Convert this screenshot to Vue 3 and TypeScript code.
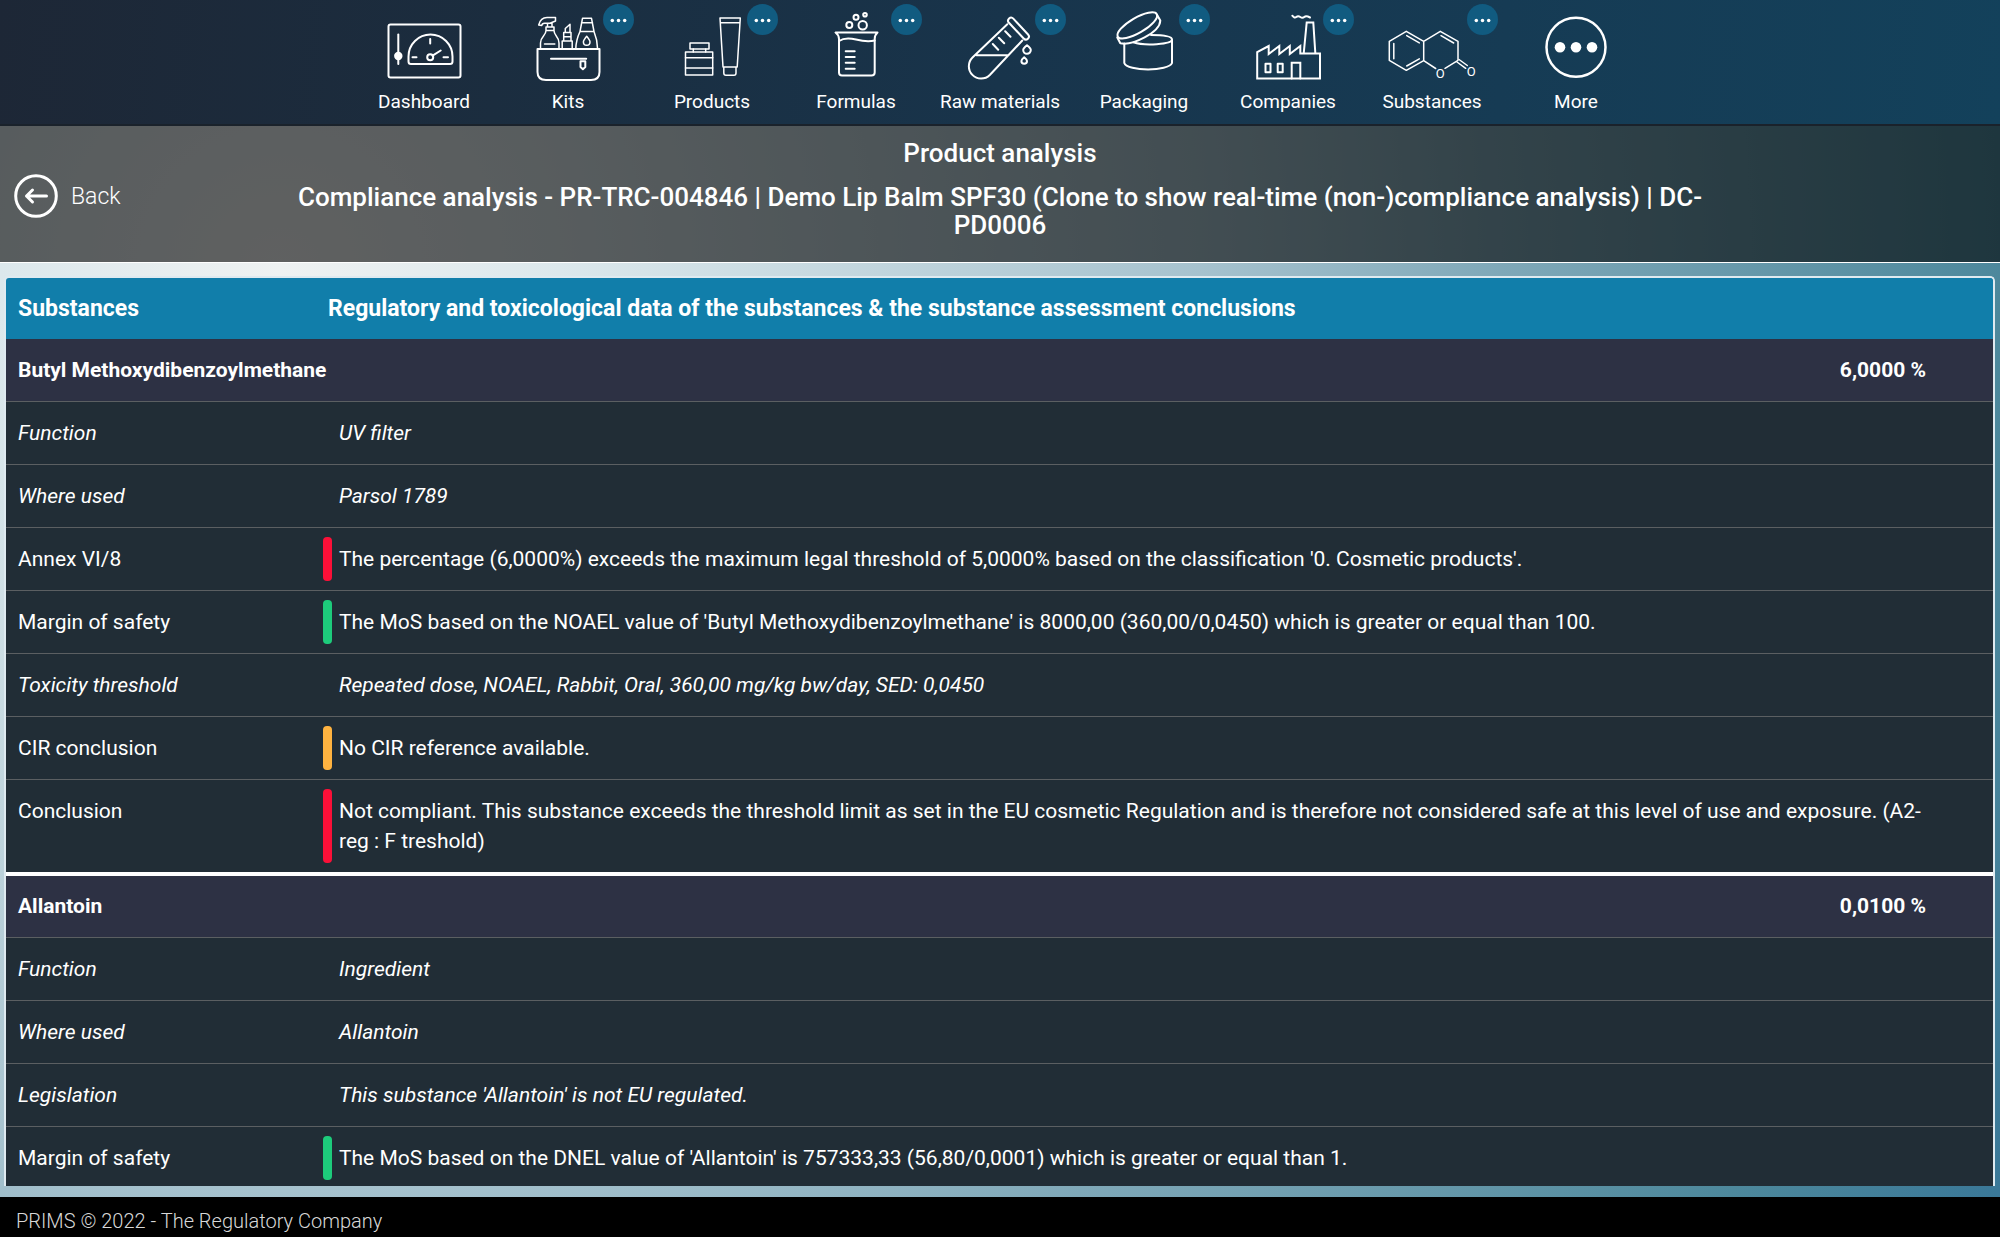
<script setup lang="ts">
type Status = 'fail' | 'pass' | 'warn'

interface NavItem {
  id: string
  label: string
  menu: boolean
}

interface Entry {
  label: string
  text: string
  note?: boolean
  status?: Status
}

interface Substance {
  name: string
  percentage: string
  entries: Entry[]
}

const navItems: NavItem[] = [
  { id: 'dashboard', label: 'Dashboard', menu: false },
  { id: 'kits', label: 'Kits', menu: true },
  { id: 'products', label: 'Products', menu: true },
  { id: 'formulas', label: 'Formulas', menu: true },
  { id: 'raw', label: 'Raw materials', menu: true },
  { id: 'packaging', label: 'Packaging', menu: true },
  { id: 'companies', label: 'Companies', menu: true },
  { id: 'substances', label: 'Substances', menu: true },
  { id: 'more', label: 'More', menu: false },
]

const substances: Substance[] = [
  {
    name: 'Butyl Methoxydibenzoylmethane',
    percentage: '6,0000 %',
    entries: [
      { label: 'Function', text: 'UV filter', note: true },
      { label: 'Where used', text: 'Parsol 1789', note: true },
      {
        label: 'Annex VI/8',
        text: "The percentage (6,0000%) exceeds the maximum legal threshold of 5,0000% based on the classification '0. Cosmetic products'.",
        status: 'fail',
      },
      {
        label: 'Margin of safety',
        text: "The MoS based on the NOAEL value of 'Butyl Methoxydibenzoylmethane' is 8000,00 (360,00/0,0450) which is greater or equal than 100.",
        status: 'pass',
      },
      {
        label: 'Toxicity threshold',
        text: 'Repeated dose, NOAEL, Rabbit, Oral, 360,00 mg/kg bw/day, SED: 0,0450',
        note: true,
      },
      { label: 'CIR conclusion', text: 'No CIR reference available.', status: 'warn' },
      {
        label: 'Conclusion',
        text: 'Not compliant. This substance exceeds the threshold limit as set in the EU cosmetic Regulation and is therefore not considered safe at this level of use and exposure. (A2-reg : F treshold)',
        status: 'fail',
      },
    ],
  },
  {
    name: 'Allantoin',
    percentage: '0,0100 %',
    entries: [
      { label: 'Function', text: 'Ingredient', note: true },
      { label: 'Where used', text: 'Allantoin', note: true },
      { label: 'Legislation', text: "This substance 'Allantoin' is not EU regulated.", note: true },
      {
        label: 'Margin of safety',
        text: "The MoS based on the DNEL value of 'Allantoin' is 757333,33 (56,80/0,0001) which is greater or equal than 1.",
        status: 'pass',
      },
    ],
  },
]
</script>

<template>
  <div class="page">
    <nav class="nav">
      <div v-for="item in navItems" :key="item.id" class="nav-item">
        <a class="nav-link" href="#">
          <svg class="nav-icon" viewBox="0 0 96 72" aria-hidden="true">
            <g v-if="item.id === 'dashboard'">
              <rect x="12.5" y="16.5" width="72" height="53" rx="2" />
              <path d="M22.3 26.5V56" />
              <circle class="solid" cx="22.3" cy="48" r="4.2" />
              <path d="M32.5 48.5A22 22 0 0 1 76.5 48.5V53.5Q76.5 56 74 56H35Q32.5 56 32.5 53.5Z" />
              <path d="M54.2 31V35.5M36.5 49.3H40.5M67.5 49.3H72M56.6 47.6L64.7 42.5" />
              <circle cx="54.2" cy="49.3" r="3" />
            </g>
            <g v-else-if="item.id === 'kits'">
              <path d="M17.5 41H79.5V64Q79.5 72 71 72H26Q17.5 72 17.5 64Z" />
              <path d="M31 50.7H66.2M60.5 53.3H65.3V59L62.9 61.2L60.5 59Z" />
              <g class="fine">
                <path d="M18.7 17C20 12 23 9.6 27 9.6H35.5V13L30 15.2H24.5Q22 15.2 21.8 17.5ZM27.5 15.2V19M32 15V19M26 19H34V22.5H26ZM26 22.5C26 28 20.5 28 20.5 35V41M34 22.5C34 28 39 28 39 35V41M24.5 36H34.8" />
                <path d="M42.2 41V33H52.2V41M43.7 33V24.5H51V33M45.3 24.5V20.5L50 16.2V24.5M43.7 28.7H51" />
                <path d="M62.5 10.3H71.5L74 23.5H60ZM61.5 14.8H72.5M60 23.5Q56 32 55.8 41M74 23.5Q77.5 32 77.6 41" />
                <path d="M66.7 28.3Q70 32.3 70 34A3.3 3.3 0 0 1 63.4 34Q63.4 32.3 66.7 28.3Z" />
              </g>
            </g>
            <g v-else-if="item.id === 'products'" class="fine">
              <rect x="26" y="35" width="19" height="6" />
              <path d="M29.3 41V44M41.7 41V44" />
              <rect x="21.5" y="44" width="27.2" height="23" />
              <path d="M21.5 49.7H48.7M21.5 60H48.7" />
              <path d="M56 10H76.3L73.2 59H59ZM56.3 14.8H76M59.8 59V65Q59.8 67.3 62 67.3H70Q72 67.3 72 65V59" />
            </g>
            <g v-else-if="item.id === 'formulas'">
              <path d="M27.5 24.5H69.5Q66.7 27 66.7 31V64.5Q66.7 67.5 63.5 67.5H34Q31 67.5 31 64.5V31Q31 27 27.5 24.5Z" />
              <path d="M31 33C36 29.5 42 30 48 31.5S60 34 66.7 32.5M37.7 43.3H46.7M37.7 49H46.7M37.7 54.8H46.7M37.7 60.7H46.7" />
              <circle cx="41.3" cy="17" r="3" />
              <circle cx="48" cy="9.3" r="2.5" />
              <circle cx="57" cy="6.7" r="1.8" />
              <circle cx="54.7" cy="17.3" r="4.2" />
            </g>
            <g v-else-if="item.id === 'raw'">
              <rect x="52.7" y="17.6" width="27.6" height="6" rx="3" transform="rotate(47 66.5 20.6)" />
              <path d="M55.3 16.3L20.5 49.5A12.2 12.2 0 0 0 37.8 67L70.3 32.5M24.5 47.2H56.5M53.2 23.3L58.5 28.7M46.8 29.7L52.2 35.3M40.8 36L46.2 41.7" />
              <path d="M75 37.3Q78.8 40.4 78.8 42A3.8 3.8 0 0 1 71.2 42Q71.2 40.4 75 37.3Z" />
              <path d="M72.2 49.3Q75 51.6 75 53A2.8 2.8 0 0 1 69.4 53Q69.4 51.6 72.2 49.3Z" />
            </g>
            <g v-else-if="item.id === 'packaging'">
              <ellipse cx="41.3" cy="17.4" rx="22.5" ry="7.6" transform="rotate(-30 41.3 17.4)" />
              <path d="M21.3 29.5L24.3 35.3C36 38 64 24.5 64.3 12.5L61 6.7" />
              <path d="M37.5 34.2C48 38 76 36.5 76 31.5C76 28 66 27 55 27M28.3 35.5V55C31 63.5 73 63.5 76 55V31.5" />
            </g>
            <g v-else-if="item.id === 'companies'">
              <path class="sharp" d="M17.2 70.5V44L28.7 38V46L39.3 38V46L49.8 38V46L60.3 38V45.4H80V70.5Z" />
              <path class="sharp" d="M63.8 45V44.5L66.7 14.5H73.3L75.3 45M51.7 70.5V54.7H60.3V70.5" />
              <rect x="25.5" y="55.7" width="5" height="8.6" />
              <rect x="37.7" y="55.7" width="5" height="8.6" />
              <path d="M52.3 7.7Q54.5 10.5 56.3 9T60.3 9T64.3 9T70 9.5" />
            </g>
            <g v-else-if="item.id === 'substances'" class="fine">
              <path d="M22.3 23.3L39.7 33.3V52.7L22.3 62.3L5.3 52.3V33.3ZM39.7 33.3L56.3 23.3L74 33.3V52.3L61 60.3M39.7 52.7L51.7 60.5" />
              <path d="M9.8 35.5V50.7M22.7 27.6L35.3 34.9M22.7 58L35.3 50.8M57 27.7L69.7 35M73 54L81.7 60.3M75 51.5L83.3 57.5" />
              <text x="56.3" y="69.5" text-anchor="middle">O</text>
              <text x="87.3" y="67.5" text-anchor="middle">O</text>
            </g>
            <g v-else>
              <circle class="ring" cx="48" cy="39.3" r="29.5" />
              <circle class="solid" cx="32" cy="39.3" r="5.3" />
              <circle class="solid" cx="48" cy="39.3" r="5.3" />
              <circle class="solid" cx="64" cy="39.3" r="5.3" />
            </g>
          </svg>
          <span class="nav-label">{{ item.label }}</span>
        </a>
        <button v-if="item.menu" class="badge" type="button" :aria-label="`${item.label} menu`">
          <svg viewBox="0 0 30 30" aria-hidden="true">
            <circle cx="9" cy="16" r="1.7" />
            <circle cx="15" cy="16" r="1.7" />
            <circle cx="21" cy="16" r="1.7" />
          </svg>
        </button>
      </div>
    </nav>

    <header class="title-bar">
      <button class="back" type="button">
        <svg viewBox="0 0 44 44" aria-hidden="true">
          <circle cx="22" cy="22" r="20.3" />
          <path d="M12.5 22H32.5M18.5 16L12.5 22L18.5 28" />
        </svg>
        <span>Back</span>
      </button>
      <div class="titles">
        <h1>Product analysis</h1>
        <h2>
          Compliance analysis - PR-TRC-004846 | Demo Lip Balm SPF30 (Clone to show real-time
          (non-)compliance analysis) | DC-PD0006
        </h2>
      </div>
    </header>

    <main class="content">
      <div class="panel">
        <table>
          <colgroup>
            <col class="col-label" />
            <col />
            <col class="col-percent" />
          </colgroup>
          <thead>
            <tr>
              <th scope="col">Substances</th>
              <th scope="col" colspan="2" class="data-head">
                Regulatory and toxicological data of the substances &amp; the substance assessment conclusions
              </th>
            </tr>
          </thead>
          <tbody v-for="substance in substances" :key="substance.name">
            <tr class="group">
              <th scope="rowgroup" colspan="2">{{ substance.name }}</th>
              <td class="percent">{{ substance.percentage }}</td>
            </tr>
            <tr v-for="entry in substance.entries" :key="entry.label" :class="{ note: entry.note }">
              <th scope="row">{{ entry.label }}</th>
              <td colspan="2">
                <div class="finding">
                  <span class="bar" :class="entry.status"></span>
                  <span class="finding-text">{{ entry.text }}</span>
                </div>
              </td>
            </tr>
          </tbody>
        </table>
      </div>
    </main>

    <footer class="footer">PRIMS © 2022 - The Regulatory Company</footer>
  </div>
</template>

<style>
body {
  margin: 0;
}
</style>

<style scoped>
.page {
  display: flex;
  flex-direction: column;
  height: 100vh;
  overflow: hidden;
  color: #fff;
  font-family: Roboto, 'Liberation Sans', sans-serif;
  font-size: 21px;
  line-height: 30px;
  background: radial-gradient(
    circle at 280px 270px,
    #eff2f2 0,
    #dce8ec 280px,
    #a6c2ce 920px,
    #7fa8b8 1220px,
    #4d889c 1720px,
    #3a7898 1950px
  );
}

.nav {
  display: flex;
  justify-content: center;
  flex: none;
  height: 124px;
  border-bottom: 2px solid #1a222b;
  background: linear-gradient(95deg, #1d2736, #1b2d3f 25%, #18344b 50%, #163b54 75%, #13415b);
}

.nav-item {
  position: relative;
  width: 144px;
}

.nav-link {
  display: flex;
  flex-direction: column;
  align-items: center;
  padding-top: 8px;
  color: #fff;
  text-decoration: none;
}

.nav-icon {
  width: 96px;
  height: 72px;
  overflow: visible;
  fill: none;
  stroke: #fff;
  stroke-width: 2;
  stroke-linecap: round;
  stroke-linejoin: round;
}

.nav-icon .fine {
  stroke-width: 1.5;
}

.nav-icon .sharp {
  stroke-linejoin: miter;
}

.nav-icon .ring {
  stroke-width: 2.5;
}

.nav-icon .solid {
  fill: #fff;
  stroke: none;
}

.nav-icon text {
  fill: #fff;
  stroke: none;
  font-size: 13px;
}

.nav-label {
  margin-top: 7px;
  font-size: 19px;
  white-space: nowrap;
}

.badge {
  position: absolute;
  top: 4px;
  left: 107px;
  width: 31px;
  height: 31px;
  padding: 0;
  border: 0;
  border-radius: 50%;
  background: #115b80;
}

.badge svg {
  display: block;
  width: 100%;
  height: 100%;
  fill: #fff;
}

.title-bar {
  display: grid;
  grid-template-columns: 14% 1fr 14%;
  align-items: center;
  flex: none;
  height: 136px;
  border-bottom: 1px solid #fff;
  background: rgba(0, 0, 0, 0.6);
}

.back {
  display: flex;
  align-items: center;
  gap: 13px;
  padding: 3px 0 0 14px;
  border: 0;
  background: none;
  color: #fff;
  font: 300 23px/30px Roboto, sans-serif;
}

.back svg {
  width: 44px;
  height: 44px;
  fill: none;
  stroke: #fff;
  stroke-width: 3;
  stroke-linecap: round;
  stroke-linejoin: round;
}

.back span {
  padding-top: 2px;
}

.titles {
  padding-bottom: 10px;
  text-align: center;
}

h1,
h2 {
  margin: 0;
  font-size: 26px;
  font-weight: 500;
  line-height: 28px;
}

h2 {
  margin-top: 16px;
}

.content {
  display: flex;
  flex: 1;
  min-height: 0;
  padding: 13px 5px 11px 4px;
}

.panel {
  flex: 1;
  overflow: auto;
  scrollbar-width: none;
  border: 2px solid #dfeaf0;
  border-bottom: 0;
  border-radius: 5px 5px 0 0;
  background: #212d36;
}

table {
  width: 100%;
  table-layout: fixed;
  border-collapse: separate;
  border-spacing: 0;
}

.col-label {
  width: 317px;
}

.col-percent {
  width: 200px;
}

th,
td {
  box-sizing: border-box;
  height: 63px;
  padding: 0 12px;
  border-bottom: 1px solid #5b5f62;
  text-align: left;
  vertical-align: top;
  font-weight: 400;
  line-height: 62px;
}

thead th {
  height: 61px;
  border-bottom: 0;
  background: #117eaa;
  font-size: 23px;
  font-weight: 700;
  line-height: 61px;
}

thead .data-head {
  padding-left: 5px;
}

.group th,
.group td {
  background: #2d3144;
  font-weight: 700;
}

.group .percent {
  padding-right: 67px;
  text-align: right;
}

tbody + tbody .group > * {
  height: 66px;
  border-top: 4px solid #fff;
  line-height: 61px;
}

tbody tr:last-child > * {
  border-bottom: 0;
}

.note {
  font-style: italic;
}

td[colspan] {
  padding: 9px 67px 9px 0;
  line-height: 30px;
}

.finding {
  display: flex;
  gap: 7px;
}

.finding-text {
  padding: 7px 0;
}

.bar {
  flex: none;
  width: 9px;
  border-radius: 4px;
}

.bar.fail {
  background: #fb1038;
}

.bar.pass {
  background: #1dcb7b;
}

.bar.warn {
  background: #ffb340;
}

.footer {
  flex: none;
  height: 40px;
  padding-left: 16px;
  background: #000;
  color: #d8d8d8;
  font-size: 20px;
  font-weight: 300;
  line-height: 48px;
}
</style>
